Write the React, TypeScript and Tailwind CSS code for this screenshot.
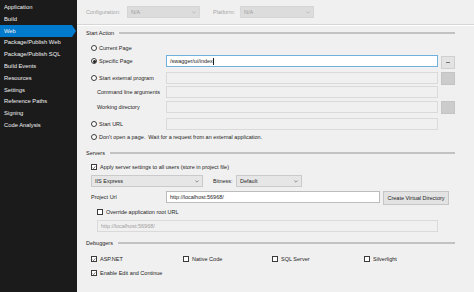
import React from "react"

const navItems = [
  "Application",
  "Build",
  "Web",
  "Package/Publish Web",
  "Package/Publish SQL",
  "Build Events",
  "Resources",
  "Settings",
  "Reference Paths",
  "Signing",
  "Code Analysis",
]

function Radio({ checked }: { checked?: boolean }) {
  return (
    <span className="w-[6px] h-[6px] rounded-full border border-[#3c3c3c] bg-white flex items-center justify-center shrink-0">
      {checked && <span className="w-[3px] h-[3px] rounded-full bg-[#1e1e1e]" />}
    </span>
  )
}

function Check({ checked }: { checked?: boolean }) {
  return (
    <span className="w-[6px] h-[6px] border border-[#3c3c3c] bg-white flex items-center justify-center shrink-0">
      {checked && (
        <svg viewBox="0 0 6 6" className="w-[5px] h-[5px]">
          <path d="M1 3.2 L2.4 4.6 L5 1.4" fill="none" stroke="#1e1e1e" strokeWidth="0.9" />
        </svg>
      )}
    </span>
  )
}

function Chevron({ disabled }: { disabled?: boolean }) {
  return (
    <svg viewBox="0 0 6 4" className="w-[4px] h-[3px]">
      <path d="M0.5 0.5 L3 3 L5.5 0.5" fill="none" stroke={disabled ? "#a8a8a8" : "#555"} strokeWidth="0.9" />
    </svg>
  )
}

function Combo({ text, width, disabled }: { text: string; width: string; disabled?: boolean }) {
  return (
    <div
      className={`${width} h-[12px] flex items-center justify-between px-[3px] border ${
        disabled ? "bg-[#dcdcdc] border-[#d6d6d6] text-[#9c9c9c]" : "bg-[#e6e6e6] border-[#cacaca] text-[#1e1e1e]"
      }`}
    >
      <span>{text}</span>
      <Chevron disabled={disabled} />
    </div>
  )
}

function TextBox({ value, width = "w-[272px]", variant = "disabled" }: { value?: string; width?: string; variant?: "focus" | "white" | "disabled" }) {
  const cls =
    variant === "focus"
      ? "bg-white border-[#6fb0df]"
      : variant === "white"
        ? "bg-white border-[#bcbcbc]"
        : "bg-[#f0f0f0] border-[#dadada] text-[#a0a0a0]"
  return (
    <div className={`${width} h-[12px] border flex items-center px-[3px] ${cls}`}>
      {value}
      {variant === "focus" && <span className="w-px h-[7px] bg-[#1e1e1e]" />}
    </div>
  )
}

function Browse({ enabled }: { enabled?: boolean }) {
  return (
    <div
      className={`w-[14px] h-[13px] border flex items-center justify-center ${
        enabled ? "bg-[#e3e3e3] border-[#cfcfcf]" : "bg-[#cccccc] border-[#c4c4c4]"
      }`}
    >
      {enabled && <span className="w-[4px] h-px bg-[#777]" />}
    </div>
  )
}

function Header({ label }: { label: string }) {
  return (
    <div className="h-[10px] flex items-center gap-[5px] pl-[9px] pr-[19px]">
      <span>{label}</span>
      <span className="flex-1 h-[2px] bg-[#c2c2c2]" />
    </div>
  )
}

export default function App() {
  return (
    <div
      className="w-[474px] h-[292px] flex overflow-hidden"
      style={{ fontFamily: '"Liberation Sans", Arial, sans-serif' }}
    >
      {/* Sidebar */}
      <div className="w-[77px] bg-[#1b1b1c] pt-[1.5px] text-[5.8px] text-[#f1f1f1]">
        {navItems.map((item) => (
          <div
            key={item}
            className={`h-[11.8px] flex items-center pl-[4px] ${
              item === "Web" ? "bg-[#007acc] [clip-path:polygon(0_0,72px_0,76px_50%,72px_100%,0_100%)]" : ""
            }`}
          >
            {item}
          </div>
        ))}
      </div>

      {/* Content */}
      <div className="flex-1 bg-[#f0f0f0] text-[5.5px] text-[#1e1e1e] flex flex-col">
        <div className="h-[16px] mt-[4px] flex items-center pl-[9px] text-[#a6a6a6]">
          <span className="w-[41px]">Configuration:</span>
          <Combo text="N/A" width="w-[73px]" disabled />
          <span className="ml-[13px] w-[27px]">Platform:</span>
          <Combo text="N/A" width="w-[74px]" disabled />
        </div>
        <div className="mt-[4px] h-px bg-[#d6d6d6]" />
        <div className="h-px bg-white" />

        <div className="mt-[2px]">
          <Header label="Start Action" />
        </div>

        <div className="mt-[5px] h-[10px] flex items-center gap-[2px] pl-[14px]">
          <Radio />
          <span>Current Page</span>
        </div>

        <div className="mt-[2px] h-[12px] flex items-center pl-[14px]">
          <div className="w-[75px] flex items-center gap-[2px]">
            <Radio checked />
            <span>Specific Page</span>
          </div>
          <TextBox value="/swagger/ui/index" variant="focus" />
          <div className="ml-[3px] mt-[2px]">
            <Browse enabled />
          </div>
        </div>

        <div className="mt-[5px] h-[12px] flex items-center pl-[14px]">
          <div className="w-[75px] flex items-center gap-[2px]">
            <Radio />
            <span>Start external program</span>
          </div>
          <TextBox />
          <div className="ml-[3px] mt-[1px]">
            <Browse />
          </div>
        </div>

        <div className="mt-[2px] h-[12px] flex items-center pl-[20px]">
          <span className="w-[69px]">Command line arguments</span>
          <TextBox />
        </div>

        <div className="mt-[3px] h-[12px] flex items-center pl-[20px]">
          <span className="w-[69px]">Working directory</span>
          <TextBox />
          <div className="ml-[3px] mt-[1px]">
            <Browse />
          </div>
        </div>

        <div className="mt-[5px] h-[12px] flex items-center pl-[14px]">
          <div className="w-[75px] flex items-center gap-[2px]">
            <Radio />
            <span>Start URL</span>
          </div>
          <TextBox />
        </div>

        <div className="mt-[2px] h-[10px] flex items-center gap-[2px] pl-[14px]">
          <Radio />
          <span>Don't open a page.&nbsp; Wait for a request from an external application.</span>
        </div>

        <div className="mt-[6px]">
          <Header label="Servers" />
        </div>

        <div className="mt-[4px] h-[10px] flex items-center gap-[3px] pl-[14px]">
          <Check checked />
          <span>Apply server settings to all users (store in project file)</span>
        </div>

        <div className="mt-[3px] h-[12px] flex items-center pl-[14px]">
          <Combo text="IIS Express" width="w-[112px]" />
          <span className="ml-[10px] w-[23px]">Bitness:</span>
          <Combo text="Default" width="w-[66px]" />
        </div>

        <div className="mt-[4px] h-[12px] flex items-center pl-[14px]">
          <span className="w-[75px]">Project Url</span>
          <TextBox value="http://localhost:56968/" width="w-[214px]" variant="white" />
          <div className="ml-[3px] mt-[2px] w-[66px] h-[14px] bg-[#e3e3e3] border border-[#c6c6c6] flex items-center justify-center">
            Create Virtual Directory
          </div>
        </div>

        <div className="mt-[4px] h-[10px] flex items-center gap-[3px] pl-[20px]">
          <Check />
          <span>Override application root URL</span>
        </div>

        <div className="mt-[3px] h-[12px] flex items-center pl-[20px]">
          <TextBox value="http://localhost:56968/" width="w-[341px]" />
        </div>

        <div className="mt-[6px]">
          <Header label="Debuggers" />
        </div>

        <div className="mt-[6px] h-[10px] flex items-center pl-[14px]">
          <div className="w-[92px] flex items-center gap-[3px]">
            <Check checked />
            <span>ASP.NET</span>
          </div>
          <div className="w-[89px] flex items-center gap-[3px]">
            <Check />
            <span>Native Code</span>
          </div>
          <div className="w-[92px] flex items-center gap-[3px]">
            <Check />
            <span>SQL Server</span>
          </div>
          <div className="flex items-center gap-[3px]">
            <Check />
            <span>Silverlight</span>
          </div>
        </div>

        <div className="mt-[4px] h-[10px] flex items-center gap-[3px] pl-[14px]">
          <Check checked />
          <span>Enable Edit and Continue</span>
        </div>
      </div>
    </div>
  )
}
